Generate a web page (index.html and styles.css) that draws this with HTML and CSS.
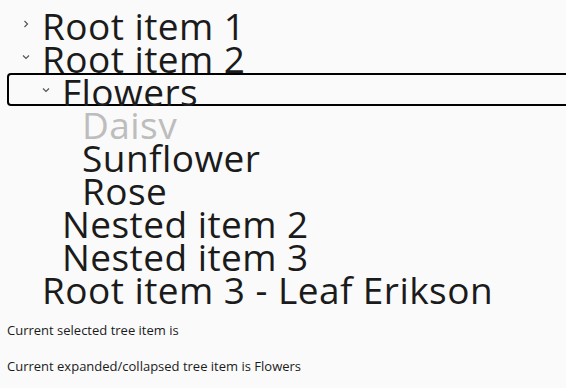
FILE: index.html
```html
<!DOCTYPE html>
<html>
<head>
<meta charset="utf-8">
<link rel="stylesheet" href="styles.css">
</head>
<body>
<div class="tree">
  <div class="item lvl1"><span class="chev"><svg width="8" height="8" viewBox="0 0 8 8"><path d="M2.5 1 L5.5 4 L2.5 7" fill="none" stroke="#555" stroke-width="1.2"/></svg></span><span class="label">Root item 1</span></div>
  <div class="item lvl1"><span class="chev"><svg width="8" height="8" viewBox="0 0 8 8"><path d="M1 2.5 L4 5.5 L7 2.5" fill="none" stroke="#555" stroke-width="1.2"/></svg></span><span class="label">Root item 2</span></div>
  <div class="item lvl2 focused"><span class="chev"><svg width="8" height="8" viewBox="0 0 8 8"><path d="M1 2.5 L4 5.5 L7 2.5" fill="none" stroke="#555" stroke-width="1.2"/></svg></span><span class="label">Flowers</span></div>
  <div class="item lvl3 disabled"><span class="chev"></span><span class="label">Daisy</span></div>
  <div class="item lvl3"><span class="chev"></span><span class="label">Sunflower</span></div>
  <div class="item lvl3"><span class="chev"></span><span class="label">Rose</span></div>
  <div class="item lvl2"><span class="chev"></span><span class="label">Nested item 2</span></div>
  <div class="item lvl2"><span class="chev"></span><span class="label">Nested item 3</span></div>
  <div class="item lvl1"><span class="chev"></span><span class="label">Root item 3 - Leaf Erikson</span></div>
</div>
<p class="status">Current selected tree item is </p>
<p class="status">Current expanded/collapsed tree item is Flowers</p>
</body>
</html>
```
FILE: styles.css
```css
html, body {
  margin: 0;
  padding: 0;
  background: #fafafa;
  overflow: hidden;
}
body {
  font-family: "Open Sans", "Noto Sans", sans-serif;
  color: #1b1b1b;
}
.tree {
  padding-top: 7px;
  margin-left: 7px;
}
.item {
  display: flex;
  align-items: center;
  height: 33px;
  width: 620px;
  box-sizing: border-box;
  font-size: 37px;
  line-height: 33px;
  white-space: nowrap;
  border-radius: 4px;
  overflow: hidden;
}
.lvl1 { padding-left: 3px; }
.lvl2 { padding-left: 23px; }
.lvl3 { padding-left: 43px; }
.chev {
  width: 32px;
  flex: none;
  display: flex;
  align-items: center;
  justify-content: center;
  height: 33px;
}
.chev svg { display: block; }
.label {
  letter-spacing: 0.45px;
  padding-top: 3px;
}
.focused {
  box-shadow: inset 0 0 0 2px #000;
}
.disabled { color: #bdbdbd; }
.status {
  font-size: 13px;
  line-height: 18px;
  margin: 17px 0 18px 7px;
}
```
